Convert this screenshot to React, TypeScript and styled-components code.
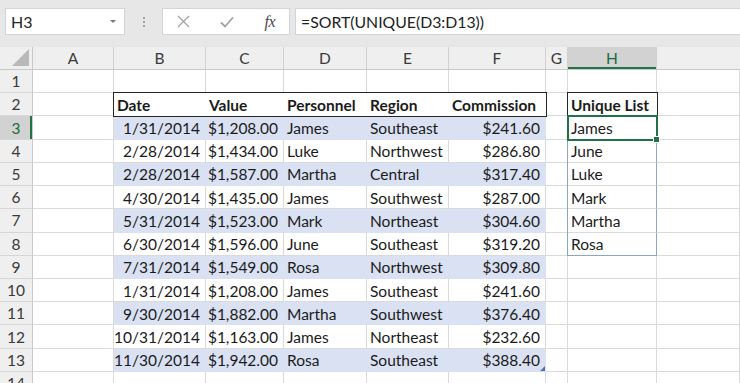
import { FC } from "react";
import styled, { createGlobalStyle, css } from "styled-components";

type Align = "left" | "right";

const COLUMNS = ["A", "B", "C", "D", "E", "F", "G", "H", ""];
const WIDTHS = [81, 92, 78, 83, 82, 97, 22, 89, 83];
const TABLE_ALIGN: Align[] = ["right", "right", "left", "left", "right"];
const HEADERS = ["Date", "Value", "Personnel", "Region", "Commission"];

const records: string[][] = [
  ["1/31/2014", "$1,208.00", "James", "Southeast", "$241.60"],
  ["2/28/2014", "$1,434.00", "Luke", "Northwest", "$286.80"],
  ["2/28/2014", "$1,587.00", "Martha", "Central", "$317.40"],
  ["4/30/2014", "$1,435.00", "James", "Southwest", "$287.00"],
  ["5/31/2014", "$1,523.00", "Mark", "Northeast", "$304.60"],
  ["6/30/2014", "$1,596.00", "June", "Southeast", "$319.20"],
  ["7/31/2014", "$1,549.00", "Rosa", "Northwest", "$309.80"],
  ["1/31/2014", "$1,208.00", "James", "Southeast", "$241.60"],
  ["9/30/2014", "$1,882.00", "Martha", "Southwest", "$376.40"],
  ["10/31/2014", "$1,163.00", "James", "Northeast", "$232.60"],
  ["11/30/2014", "$1,942.00", "Rosa", "Southeast", "$388.40"],
];

const uniqueList = ["James", "June", "Luke", "Mark", "Martha", "Rosa"];

const BAND = "#d9e1f2";
const GREEN = "#217346";

const GlobalStyle = createGlobalStyle`
  html, body {
    margin: 0;
    padding: 0;
    background: #fff;
    overflow: hidden;
  }
  body {
    font-family: Lato, "Open Sans", sans-serif;
    color: #1b1b1b;
  }
`;

const XIcon = () => (
  <svg width="13" height="13" viewBox="0 0 13 13">
    <path d="M1 1 L12 12 M12 1 L1 12" stroke="#a3a3a3" strokeWidth="1.3" fill="none" />
  </svg>
);

const CheckIcon = () => (
  <svg width="14" height="12" viewBox="0 0 14 12">
    <path d="M1 6.5 L5 10.5 L13 1.5" stroke="#a3a3a3" strokeWidth="1.8" fill="none" />
  </svg>
);

const App: FC = () => {
  const rows = Array.from({ length: 14 }, (_, i) => i + 1);

  const renderTableCells = (r: number) => {
    if (r === 2) {
      return (
        <HeaderBand>
          {HEADERS.map((h, c) => (
            <Cell key={h} $w={WIDTHS[c + 1]} $fill="#fff" $bold>
              {h}
            </Cell>
          ))}
        </HeaderBand>
      );
    }
    if (r >= 3 && r <= 13) {
      const record = records[r - 3];
      const fill = r % 2 === 1 ? BAND : undefined;
      return record.map((v, c) => (
        <Cell
          key={c}
          $w={WIDTHS[c + 1]}
          $fill={fill}
          $align={TABLE_ALIGN[c]}
          $resize={r === 13 && c === 4}
        >
          {v}
        </Cell>
      ));
    }
    return WIDTHS.slice(1, 6).map((w, c) => <Cell key={c} $w={w} />);
  };

  const renderUnique = (r: number) => {
    if (r === 2) {
      return (
        <HeaderBand>
          <Cell $w={WIDTHS[7]} $fill="#fff" $bold>
            Unique List
          </Cell>
        </HeaderBand>
      );
    }
    if (r >= 3 && r <= 8) {
      return (
        <Cell
          $w={WIDTHS[7]}
          $spill={r === 3 ? "top" : r === 8 ? "bottom" : "mid"}
          $selected={r === 3}
        >
          {uniqueList[r - 3]}
        </Cell>
      );
    }
    return <Cell $w={WIDTHS[7]} />;
  };

  return (
    <Window>
      <GlobalStyle />
      <Toolbar>
        <NameBox>
          <span>H3</span>
          <DropArrow />
        </NameBox>
        <Grip>
          <Dot />
          <Dot />
          <Dot />
        </Grip>
        <FuncBox>
          <XIcon />
          <CheckIcon />
          <Fx>fx</Fx>
        </FuncBox>
        <FormulaInput>=SORT(UNIQUE(D3:D13))</FormulaInput>
      </Toolbar>

      <Sheet>
        <ColHeaderRow>
          <Corner>
            <CornerTriangle />
          </Corner>
          {COLUMNS.map((c, i) => (
            <ColHead
              key={i}
              $w={WIDTHS[i]}
              $active={c === "H"}
              $last={i === COLUMNS.length - 1}
            >
              {c}
            </ColHead>
          ))}
        </ColHeaderRow>

        {rows.map((r) => (
          <SheetRow key={r}>
            <RowHead $active={r === 3}>{r}</RowHead>
            <Cell $w={WIDTHS[0]} />
            {renderTableCells(r)}
            <Cell $w={WIDTHS[6]} />
            {renderUnique(r)}
            <Cell $w={WIDTHS[8]} $grow />
          </SheetRow>
        ))}
      </Sheet>
    </Window>
  );
};

export default App;

const Window = styled.div`
  width: 740px;
  height: 383px;
  overflow: hidden;
  display: flex;
  flex-direction: column;
  background: #fff;
`;

const Toolbar = styled.div`
  flex: none;
  height: 47px;
  box-sizing: border-box;
  padding: 8px 0 0 5px;
  background: #e7e7e7;
  display: flex;
  align-items: flex-start;
`;

const boxBase = css`
  height: 27px;
  box-sizing: border-box;
  background: #fff;
  border: 1px solid #d4d4d4;
  display: flex;
  align-items: center;
`;

const NameBox = styled.div`
  ${boxBase};
  width: 120px;
  justify-content: space-between;
  padding: 0 8px 0 5px;
  font-size: 16px;
  color: #262626;
`;

const DropArrow = styled.span`
  width: 0;
  height: 0;
  border-left: 3px solid transparent;
  border-right: 3px solid transparent;
  border-top: 3px solid #7a7a7a;
`;

const Grip = styled.div`
  width: 37px;
  height: 27px;
  display: flex;
  flex-direction: column;
  align-items: center;
  justify-content: center;
  gap: 2px;
`;

const Dot = styled.span`
  width: 2px;
  height: 2px;
  background: #a5a5a5;
`;

const FuncBox = styled.div`
  ${boxBase};
  width: 128px;
  padding: 0 14px 0 14px;
  justify-content: space-between;
`;

const Fx = styled.i`
  font-family: "Liberation Serif", serif;
  font-size: 16px;
  color: #4a4a4a;
  letter-spacing: -0.5px;
`;

const FormulaInput = styled.div`
  ${boxBase};
  flex: 1;
  margin-left: 5px;
  padding-left: 5px;
  border-right: none;
  font-size: 15.8px;
  color: #222;
`;

const Sheet = styled.div`
  flex: 1;
  display: flex;
  flex-direction: column;
  font-size: 15.5px;
  overflow: hidden;
`;

const ColHeaderRow = styled.div`
  flex: none;
  height: 23px;
  display: flex;
  background: #efefef;
  border-bottom: 1px solid #c9c9c9;
  box-sizing: border-box;
`;

const Corner = styled.div`
  flex: none;
  width: 33px;
  box-sizing: border-box;
  border-right: 1px solid #c9c9c9;
  display: flex;
  align-items: flex-end;
  justify-content: flex-end;
  padding: 0 3px 3px 0;
`;

const CornerTriangle = styled.span`
  width: 0;
  height: 0;
  border-left: 17px solid transparent;
  border-bottom: 17px solid #b9b9b9;
`;

const ColHead = styled.div<{ $w: number; $active?: boolean; $last?: boolean }>`
  flex: ${(p) => (p.$last ? "1" : "none")};
  width: ${(p) => p.$w}px;
  box-sizing: border-box;
  border-right: 1px solid ${(p) => (p.$last ? "transparent" : "#d0d0d0")};
  display: flex;
  align-items: center;
  justify-content: center;
  color: #3a3a3a;
  ${(p) =>
    p.$active &&
    css`
      background: #d2d2d2;
      color: #1d6a40;
      box-shadow: inset 0 -2px 0 ${GREEN};
    `}
`;

const SheetRow = styled.div`
  flex: none;
  height: 23.23px;
  display: flex;
`;

const RowHead = styled.div<{ $active?: boolean }>`
  flex: none;
  width: 33px;
  box-sizing: border-box;
  background: #efefef;
  border-right: 1px solid #c9c9c9;
  border-bottom: 1px solid #d6d6d6;
  display: flex;
  align-items: center;
  justify-content: center;
  color: #3a3a3a;
  ${(p) =>
    p.$active &&
    css`
      background: #d2d2d2;
      color: #1d6a40;
      box-shadow: inset -2px 0 0 ${GREEN};
    `}
`;

type CellProps = {
  $w: number;
  $fill?: string;
  $align?: Align;
  $bold?: boolean;
  $grow?: boolean;
  $spill?: "top" | "mid" | "bottom";
  $selected?: boolean;
  $resize?: boolean;
};

const SPILL = "#8da6c7";

const Cell = styled.div<CellProps>`
  position: relative;
  flex: ${(p) => (p.$grow ? "1" : "none")};
  width: ${(p) => p.$w}px;
  height: 100%;
  box-sizing: border-box;
  background: ${(p) => p.$fill ?? "#fff"};
  border-right: 1px solid ${(p) => p.$fill ?? "#dadada"};
  border-bottom: 1px solid ${(p) => p.$fill ?? "#dadada"};
  display: flex;
  align-items: center;
  justify-content: ${(p) => (p.$align === "right" ? "flex-end" : "flex-start")};
  padding: 1px 5px 0 3px;
  font-weight: ${(p) => (p.$bold ? 700 : 400)};
  white-space: nowrap;

  ${(p) =>
    p.$spill &&
    css`
      z-index: 1;
      border-right-color: ${SPILL};
      border-bottom-color: ${p.$spill === "bottom" ? SPILL : "#dadada"};
      box-shadow: -1px 0 0 ${SPILL}
        ${p.$spill === "top" ? `, 0 -1px 0 ${SPILL}` : ""};
    `}

  ${(p) =>
    p.$selected &&
    css`
      z-index: 3;
      outline: 2px solid ${GREEN};
      outline-offset: -1px;
      &::after {
        content: "";
        position: absolute;
        right: -4px;
        bottom: -4px;
        width: 5px;
        height: 5px;
        background: ${GREEN};
        border: 1px solid #fff;
      }
    `}

  ${(p) =>
    p.$resize &&
    css`
      &::after {
        content: "";
        position: absolute;
        right: 0;
        bottom: 0;
        border-left: 5px solid transparent;
        border-bottom: 5px solid #4f74b8;
      }
    `}
`;

const HeaderBand = styled.div`
  position: relative;
  z-index: 2;
  display: flex;
  flex: none;
  height: 100%;
  outline: 2px solid #262626;
  outline-offset: -1px;
`;
